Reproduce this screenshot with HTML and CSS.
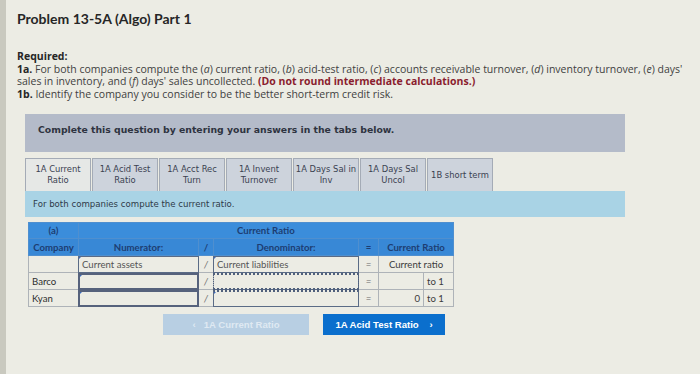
FILE: index.html
```html
<!DOCTYPE html>
<html lang="en">

<head>
    <meta charset="UTF-8">
    <meta name="viewport" content="width=device-width, initial-scale=1.0">
    <title>Problem 13-5A (Algo) Part 1</title>
    <link rel="stylesheet" href="styles.css">
</head>

<body>
    <div class="page">
        <h1 class="title">Problem 13-5A (Algo) Part 1</h1>

        <div class="required">
            <p class="req-label">Required:</p>
            <p><b>1a.</b> For both companies compute the (<i>a</i>) current ratio, (<i>b</i>) acid-test ratio, (<i>c</i>) accounts receivable turnover, (<i>d</i>) inventory turnover, (<i>e</i>) days' sales in inventory, and (<i>f</i>) days' sales uncollected. <b class="warn">(Do not round intermediate calculations.)</b></p>
            <p><b>1b.</b> Identify the company you consider to be the better short-term credit risk.</p>
        </div>

        <div class="panel">
            <div class="panel-head">Complete this question by entering your answers in the tabs below.</div>

            <div class="tabs">
                <div class="tab active">1A Current<br>Ratio</div>
                <div class="tab">1A Acid Test<br>Ratio</div>
                <div class="tab">1A Acct Rec<br>Turn</div>
                <div class="tab">1A Invent<br>Turnover</div>
                <div class="tab">1A Days Sal in<br>Inv</div>
                <div class="tab">1A Days Sal<br>Uncol</div>
                <div class="tab">1B short term</div>
            </div>

            <div class="prompt">For both companies compute the current ratio.</div>
        </div>

        <table class="ratio-table">
            <colgroup>
                <col class="w-company">
                <col class="w-num">
                <col class="w-slash">
                <col class="w-den">
                <col class="w-eq">
                <col class="w-val">
                <col class="w-to">
            </colgroup>
            <tr class="head-1">
                <th>(a)</th>
                <th colspan="6" class="span-title">Current Ratio</th>
            </tr>
            <tr class="head-2">
                <th>Company</th>
                <th>Numerator:</th>
                <th>/</th>
                <th>Denominator:</th>
                <th>=</th>
                <th colspan="2">Current Ratio</th>
            </tr>
            <tr>
                <td></td>
                <td class="cell-input"><div class="field flag">Current assets</div></td>
                <td class="op">/</td>
                <td class="cell-input"><div class="field flag">Current liabilities</div></td>
                <td class="op">=</td>
                <td colspan="2" class="centered">Current ratio</td>
            </tr>
            <tr>
                <td class="name">Barco</td>
                <td class="cell-input"><div class="field flag thick"></div></td>
                <td class="op">/</td>
                <td class="cell-input"><div class="field dotted"></div></td>
                <td class="op">=</td>
                <td class="val"></td>
                <td class="to">to 1</td>
            </tr>
            <tr>
                <td class="name">Kyan</td>
                <td class="cell-input"><div class="field flag thick"></div></td>
                <td class="op">/</td>
                <td class="cell-input"><div class="field flag dotted-top"></div></td>
                <td class="op">=</td>
                <td class="val">0</td>
                <td class="to">to 1</td>
            </tr>
        </table>

        <div class="nav-buttons">
            <button class="btn btn-prev">&lsaquo;&nbsp;&nbsp; 1A Current Ratio</button>
            <button class="btn btn-next">1A Acid Test Ratio&nbsp;&nbsp;&nbsp; &rsaquo;</button>
        </div>
    </div>
</body>

</html>
```

FILE: styles.css
```css
* {
    margin: 0;
    padding: 0;
    box-sizing: border-box;
}

body {
    background-color: #ecece4;
    font-family: 'Lato', 'Liberation Sans', sans-serif;
    color: #2d2d2d;
    border-left: 6px solid #c9c9bf;
    min-height: 374px;
}

.page {
    padding: 10px 0 0 11px;
}

.title {
    font-size: 14px;
    font-weight: bold;
    color: #262626;
    line-height: 17px;
}

.required {
    margin-top: 23px;
    font-family: 'Open Sans', 'Liberation Sans', sans-serif;
    font-size: 10.5px;
    line-height: 12.6px;
    color: #3f3f3f;
    width: 670px;
}

.required b {
    color: #262626;
}

.req-label {
    font-weight: bold;
    color: #262626;
}

.required .warn {
    color: #8a1d2e;
}

.panel {
    margin: 14px 0 0 8px;
    width: 600px;
}

.panel-head {
    background-color: #b4bbc9;
    height: 38px;
    padding: 10px 0 0 13px;
    font-family: 'DejaVu Sans', Verdana, sans-serif;
    font-size: 9.3px;
    font-weight: bold;
    color: #2e3340;
}

.tabs {
    display: flex;
    margin-top: 6px;
    gap: 1px;
}

.tab {
    width: 66px;
    height: 33px;
    background-color: #cdd3dc;
    border: 1px solid #a4abb6;
    border-bottom: none;
    font-family: 'DejaVu Sans', Verdana, sans-serif;
    font-size: 8.4px;
    line-height: 11px;
    color: #3a4150;
    text-align: center;
    display: flex;
    align-items: center;
    justify-content: center;
}

.tab.active {
    background-color: #e6e8e6;
}

.prompt {
    background-color: #a9d3e5;
    height: 26px;
    padding: 8px 0 0 8px;
    font-family: 'DejaVu Sans', Verdana, sans-serif;
    font-size: 8.6px;
    color: #2e3a48;
}

.ratio-table {
    margin: 5px 0 0 11px;
    border-collapse: collapse;
    font-size: 9.6px;
    table-layout: fixed;
    width: 425px;
}

.w-company { width: 50px; }
.w-num { width: 120px; }
.w-slash { width: 15px; }
.w-den { width: 145px; }
.w-eq { width: 20px; }
.w-val { width: 45px; }
.w-to { width: 30px; }

.ratio-table th {
    color: #1d3d72;
    font-weight: bold;
    height: 17px;
    border: 1px solid #4f8fcf;
    background-color: #3b8ddb;
    white-space: nowrap;
}

.head-1 th {
    height: 16px;
    border-bottom: none;
}

.head-1 .span-title {
    text-align: left;
    padding-left: 158px;
    border-left: 1px solid #5e9bd6;
}

.head-2 th {
    background-color: #3888d6;
}

.ratio-table td {
    height: 17px;
    border: 1px solid #aeb3b8;
    color: #3b3b3b;
    padding: 0;
    white-space: nowrap;
}

.ratio-table td.op {
    text-align: center;
    color: #6a6a6a;
    font-style: italic;
}

.ratio-table td.name {
    padding-left: 3px;
    color: #2e2e2e;
}

.ratio-table td.val {
    text-align: right;
    padding-right: 3px;
}

.ratio-table td.to {
    padding-left: 3px;
}

.centered {
    text-align: center;
}

.ratio-table td.cell-input {
    border-color: #5a6b86;
}

.field {
    position: relative;
    height: 17px;
    margin: -1px;
    border: 1px solid #5a6b86;
    padding: 2px 0 0 3px;
    color: #555;
    overflow: hidden;
}

.field.thick {
    border: 2px solid #56627c;
}

.field.dotted {
    border: 1px dotted #50607c;
    border-top: 2px dotted #50607c;
    border-bottom: 2px dotted #50607c;
}

.field.dotted-top {
    border: 1px solid #5a6b86;
    border-top: 2px dotted #50607c;
}

.flag::before {
    content: "";
    position: absolute;
    left: -1px;
    top: -1px;
    border-top: 4px solid #3a68b8;
    border-right: 4px solid transparent;
}

.nav-buttons {
    display: flex;
    gap: 14px;
    margin: 7px 0 0 146px;
}

.btn {
    height: 21px;
    border: none;
    font-family: 'Liberation Sans', Arial, sans-serif;
    font-size: 9.6px;
    font-weight: bold;
    color: #fff;
}

.btn-prev {
    width: 146px;
    background-color: #b8cfe3;
    color: #dfe9f2;
}

.btn-next {
    width: 122px;
    background-color: #0b6fcd;
}
```
